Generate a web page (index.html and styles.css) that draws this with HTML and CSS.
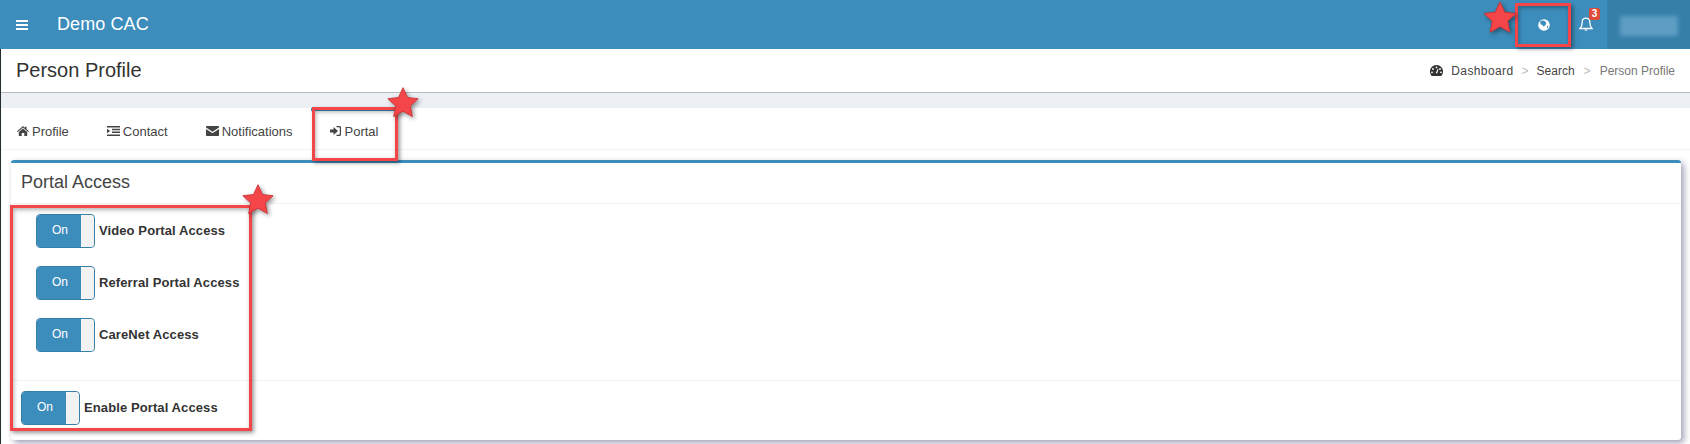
FILE: index.html
```html
<!DOCTYPE html>
<html lang="en">
<head>
<meta charset="utf-8">
<title>Person Profile</title>
<link rel="stylesheet" href="styles.css">
</head>
<body>
<header class="topbar">
  <svg class="burger" width="12" height="10" viewBox="0 0 12 10"><path d="M0 0h12v2H0zM0 4h12v2H0zM0 8h12v2H0z" fill="#fff"/></svg>
  <span class="brand">Demo CAC</span>
  <div class="top-right">
    <div class="top-item globe-item">
      <svg width="12" height="12" viewBox="0 0 14 14"><circle cx="7" cy="7" r="6.8" fill="#fff"/><path d="M2.500 3C4.200 1.400 6.500 1.500 8.200 2.500L9.600 4.600 8.800 7 6.800 9 5.400 7.200 3 6.200zM10.800 8l1.400-.4-.8 2.600-1.400 1.200z" fill="#3c8dbc"/></svg>
    </div>
    <div class="top-item bell-item">
      <svg width="14" height="15" viewBox="0 0 14 15"><path d="M7 1.200C4.600 1.200 3.200 3 3.200 5.200c0 3.600-1 5-2.200 6.300h12C11.800 10.200 10.800 8.800 10.800 5.200 10.800 3 9.400 1.200 7 1.200z" fill="none" stroke="#fff" stroke-width="1.300"/><path d="M5.300 12.500a1.800 1.800 0 0 0 3.400 0z" fill="#fff"/></svg>
      <span class="badge">3</span>
    </div>
    <div class="user"><span class="user-blur"></span></div>
  </div>
</header>

<div class="page">
  <div class="page-head">
    <h1 class="page-title">Person Profile</h1>
    <nav class="crumbs">
      <svg class="crumb-icon" width="13" height="11" viewBox="0 0 13 11"><path d="M6.500 0A6.500 6.500 0 0 0 1.300 10.400c.2.300.5.600.9.600h8.600c.4 0 .7-.3.900-.6A6.500 6.500 0 0 0 6.500 0z" fill="#333"/><circle cx="6.500" cy="2.300" r=".9" fill="#fff"/><circle cx="3" cy="4" r=".9" fill="#fff"/><circle cx="10" cy="4" r=".9" fill="#fff"/><circle cx="2" cy="7.300" r=".9" fill="#fff"/><circle cx="11" cy="7.300" r=".9" fill="#fff"/><path d="M5.800 8l2-4.300.7.300-1.300 4.500z" fill="#fff"/></svg>
      <span class="crumb first">Dashboard</span><span class="sep">&gt;</span><span class="crumb">Search</span><span class="sep">&gt;</span><span class="crumb current">Person Profile</span>
    </nav>
  </div>
  <div class="band"></div>
  <ul class="tabs">
    <li class="tab">
      <svg width="12" height="10" viewBox="0 0 12 10"><path d="M6 0l2 1.700V.7h1.500V3L12 5.200l-.7.700L6 1.500.7 5.900 0 5.200zM1.800 6L6 2.500 10.200 6v4H7.300V7H4.700v3H1.800z" fill="#444"/></svg>
      <span>Profile</span>
    </li>
    <li class="tab">
      <svg width="13" height="10" viewBox="0 0 13 10"><path d="M0 0h13v1.500H0zM5 2.800h8v1.400H5zM5 5.600h8V7H5zM0 8.500h13V10H0zM0 2.800L3.200 5 0 7.200z" fill="#444"/></svg>
      <span>Contact</span>
    </li>
    <li class="tab">
      <svg width="13" height="10" viewBox="0 0 13 10"><path d="M1 0h11c.6 0 1 .4 1 1v.6L6.500 5.800 0 1.600V1c0-.6.400-1 1-1zM0 3l6.500 4.200L13 3v6c0 .6-.4 1-1 1H1c-.6 0-1-.4-1-1z" fill="#444"/></svg>
      <span>Notifications</span>
    </li>
    <li class="tab active">
      <svg width="11" height="10" viewBox="0 0 11 10"><path d="M0 3.500h3.500V1L8 5 3.500 9V6.500H0zM6.500 0H9.500C10.400 0 11 .6 11 1.500v7c0 .9-.6 1.500-1.500 1.500h-3V8.800H9c.5 0 .8-.3.8-.8V2c0-.5-.3-.8-.8-.8H6.500z" fill="#444"/></svg>
      <span>Portal</span>
    </li>
  </ul>
  <section class="card">
    <h2 class="card-title">Portal Access</h2>
    <div class="rows">
      <div class="row"><span class="toggle"><span class="toggle-on">On</span><span class="toggle-handle"></span></span><label class="row-label">Video Portal Access</label></div>
      <div class="row"><span class="toggle"><span class="toggle-on">On</span><span class="toggle-handle"></span></span><label class="row-label">Referral Portal Access</label></div>
      <div class="row"><span class="toggle"><span class="toggle-on">On</span><span class="toggle-handle"></span></span><label class="row-label">CareNet Access</label></div>
    </div>
    <div class="card-foot">
      <div class="row"><span class="toggle"><span class="toggle-on">On</span><span class="toggle-handle"></span></span><label class="row-label">Enable Portal Access</label></div>
    </div>
  </section>
</div>

<div class="mark mark-globe"></div>
<div class="mark mark-portal"></div>
<div class="mark mark-access"></div>
<svg class="star star-globe" viewBox="0 0 40 40"><path d="M20 2l5.300 11.500 12.500 1.500-9.200 8.500 2.400 12.400L20 29.700 9 35.900l2.400-12.400L2.200 15l12.500-1.500z"/></svg>
<svg class="star star-portal" viewBox="0 0 40 40"><path d="M20 2l5.300 11.500 12.500 1.500-9.200 8.500 2.400 12.400L20 29.700 9 35.900l2.400-12.400L2.200 15l12.500-1.500z"/></svg>
<svg class="star star-access" viewBox="0 0 40 40"><path d="M20 2l5.300 11.500 12.500 1.500-9.200 8.500 2.400 12.400L20 29.700 9 35.900l2.400-12.400L2.200 15l12.500-1.500z"/></svg>
</body>
</html>
```
FILE: styles.css
```css
* { box-sizing: border-box; }
html, body { margin: 0; padding: 0; }
body {
  width: 1690px;
  height: 444px;
  overflow: hidden;
  position: relative;
  background: #fff;
  font-family: "Liberation Sans", Arial, sans-serif;
  color: #333;
}
.topbar {
  height: 49px;
  background: #3c8dbc;
  display: flex;
  align-items: center;
  padding-left: 16px;
  color: #fff;
}
.brand { margin-left: 29px; font-size: 18px; letter-spacing: .1px; }
.top-right { margin-left: auto; display: flex; height: 100%; align-items: stretch; }
.top-item { display: flex; align-items: center; justify-content: center; position: relative; }
.globe-item { width: 50px; padding-right: 2px; }
.bell-item { width: 37px; padding-right: 6px; }
.badge {
  position: absolute;
  top: 8px;
  left: 19px;
  width: 11px;
  height: 12px;
  border-radius: 2px;
  background: #dd4b39;
  color: #fff;
  font-size: 10px;
  font-weight: bold;
  line-height: 12px;
  text-align: center;
}
.user { width: 83px; background: #367fa9; padding: 16px 12px 13px 13px; }
.user-blur { display: block; height: 20px; background: #5e9ec4; filter: blur(2px); }
.page { border-left: 1px solid #222d32; height: 395px; }
.page-head {
  height: 44px;
  border-bottom: 1px solid #bbb;
  display: flex;
  align-items: center;
  justify-content: space-between;
  padding: 0 15px;
}
.page-title { margin: 0; font-size: 20px; font-weight: normal; color: #333; }
.crumbs { display: flex; align-items: center; font-size: 12px; color: #444; }
.crumb-icon { margin-right: 8px; }
.first { letter-spacing: .4px; }
.sep { margin: 0 9px; color: #bbb; }
.first + .sep { margin: 0 8px; }
.current { color: #777; }
.band { height: 15px; background: #ecf0f5; }
.tabs {
  list-style: none;
  margin: 0;
  padding: 0;
  height: 42px;
  border-bottom: 1px solid #f4f4f4;
  display: flex;
  font-size: 13px;
  color: #444;
}
.tab { display: flex; align-items: center; gap: 3px; padding: 5px 19px 0; }
.tab:first-child { padding-left: 16px; }
.tab.active { border-top: 3px solid #3c8dbc; padding-top: 2px; }
.card {
  margin: 10px 9px 0 10px;
  height: 280px;
  background: #fff;
  border-top: 3px solid #3c8dbc;
  border-radius: 3px;
  box-shadow: 3px 3px 6px rgba(70, 70, 120, .5);
}
.card-title {
  margin: 0;
  height: 41px;
  padding-left: 10px;
  border-bottom: 1px solid #f4f4f4;
  font-size: 18px;
  font-weight: normal;
  line-height: 38px;
  color: #444;
}
.rows {
  height: 177px;
  padding: 10px 0 0 25px;
  display: flex;
  flex-direction: column;
  gap: 18px;
  border-bottom: 1px solid #f4f4f4;
}
.row { display: flex; align-items: center; gap: 4px; height: 34px; }
.row-label { font-size: 13px; font-weight: bold; color: #333; letter-spacing: .1px; padding-bottom: 2px; }
.card-foot { padding: 10px 0 0 10px; }
.toggle {
  width: 59px;
  height: 34px;
  display: flex;
  border: 1px solid #367fa9;
  border-radius: 4px;
  overflow: hidden;
}
.toggle-on {
  width: 44px;
  padding-left: 2px;
  background: #3c8dbc;
  color: #fff;
  font-size: 12px;
  line-height: 30px;
  text-align: center;
}
.toggle-handle { flex: 1; background: #f2f2f2; border-radius: 4px; }
.mark {
  position: absolute;
  border: 3px solid #f44548;
  box-shadow: 2px 2px 4px rgba(0, 0, 0, .4), inset 1px 2px 4px rgba(0, 0, 0, .3);
}
.mark-globe { left: 1515px; top: 3px; width: 56px; height: 44px; }
.mark-portal { left: 312px; top: 107px; width: 86px; height: 54px; }
.mark-access { left: 10px; top: 205px; width: 242px; height: 226px; }
.star {
  position: absolute;
  fill: #f44548;
  stroke: #c93033;
  stroke-width: 1;
  filter: drop-shadow(2px 2px 2px rgba(0, 0, 0, .4));
}
.star-globe { left: 1482px; top: 0; width: 36px; height: 36px; }
.star-portal { left: 386px; top: 86px; width: 34px; height: 34px; }
.star-access { left: 241px; top: 183px; width: 34px; height: 34px; }
```
